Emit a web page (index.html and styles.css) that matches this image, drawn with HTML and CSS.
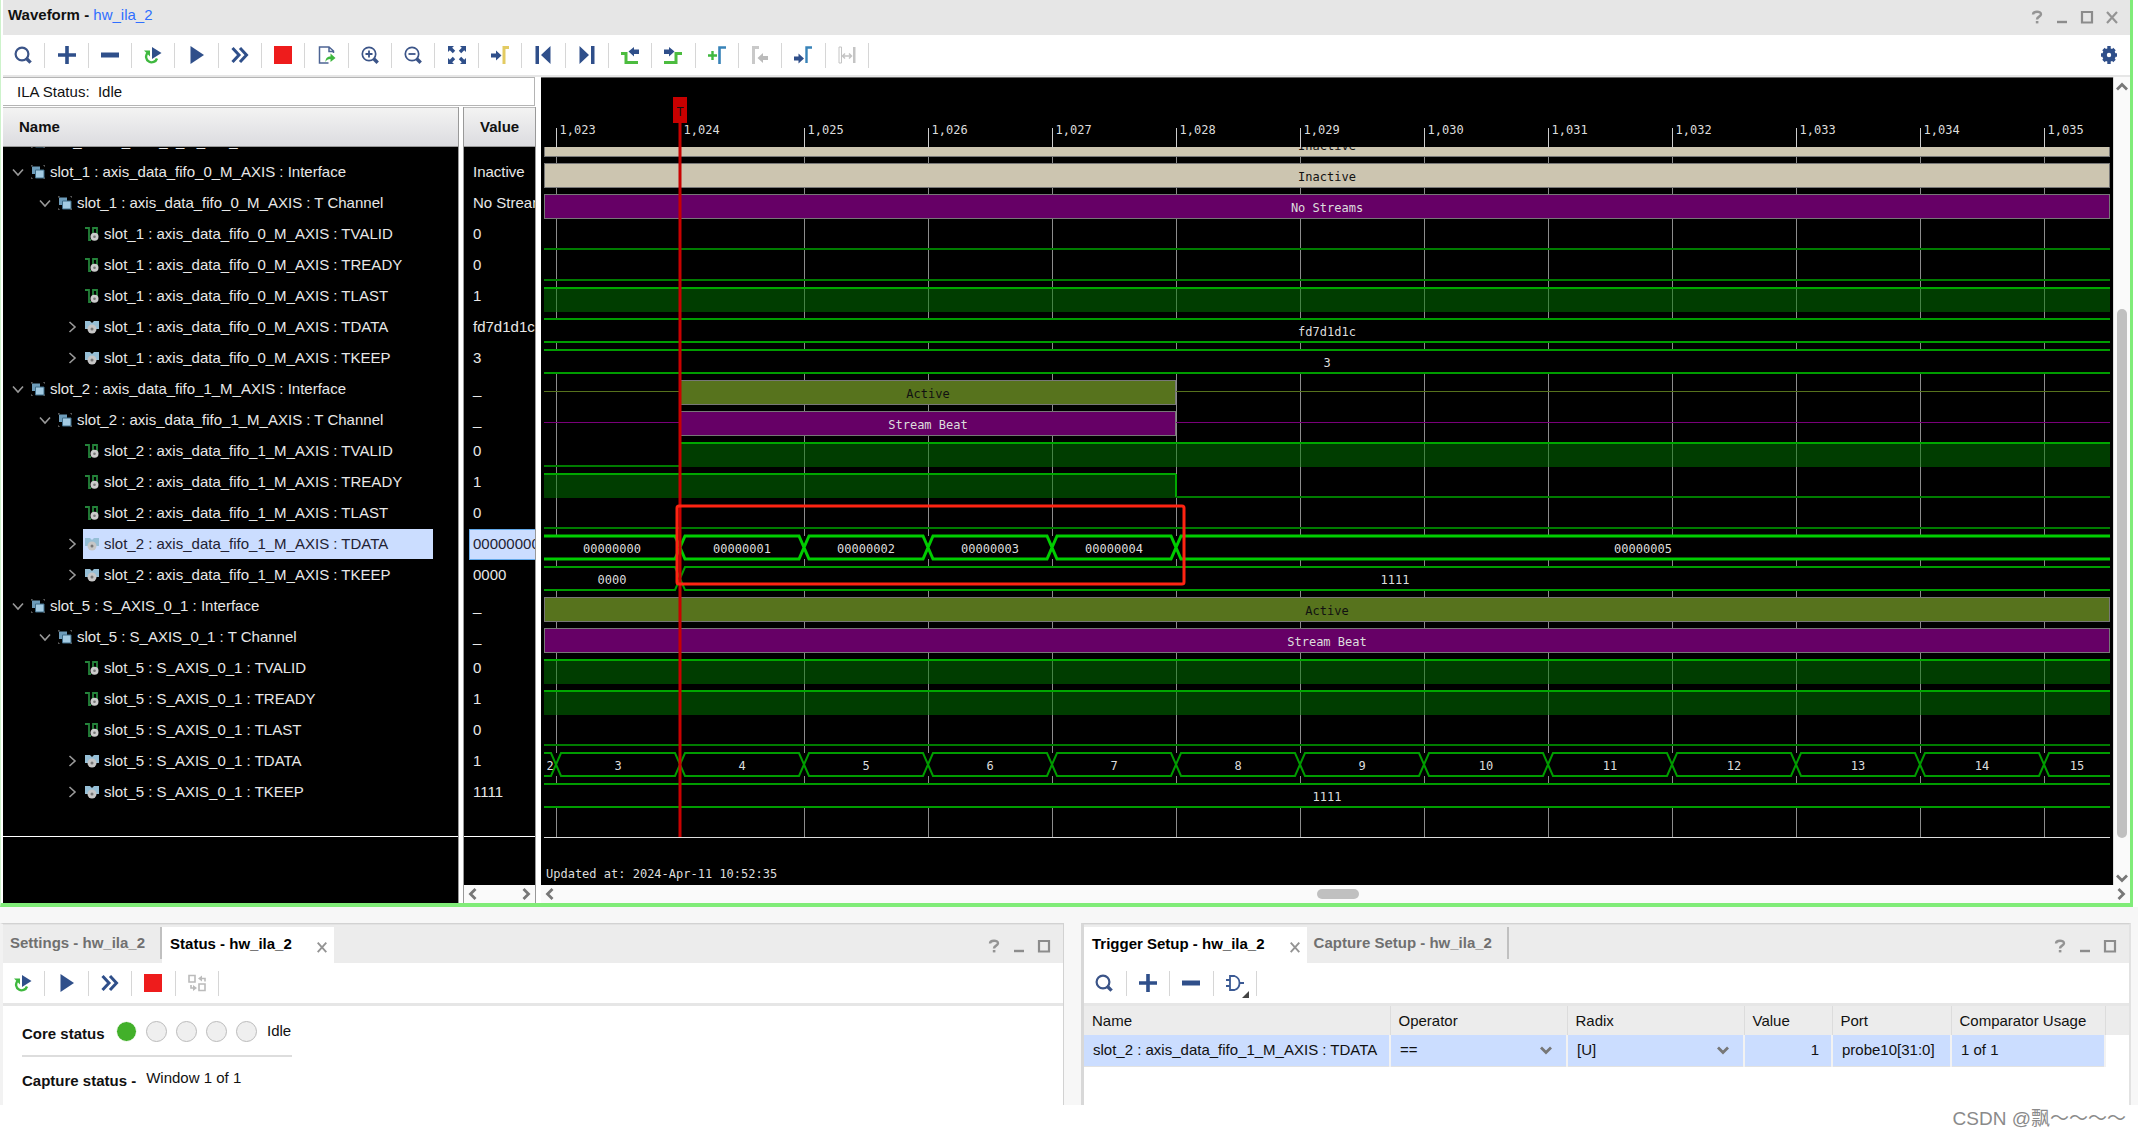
FILE: index.html
```html
<!DOCTYPE html>
<html lang="en">
<head>
    <meta charset="UTF-8">
    <meta name="viewport" content="width=device-width, initial-scale=1.0">
    <title>Waveform - hw_ila_2</title>
    <link rel="stylesheet" href="styles.css">
</head>
<body>
    <!-- shared icons -->
    <svg class="sprite" aria-hidden="true">
        <symbol id="i-search" viewBox="0 0 18 18"><circle cx="8" cy="8" r="6.4" fill="none" stroke="#3b5488" stroke-width="2.2"/><path d="M12 12l4.6 4.6" stroke="#3b5488" stroke-width="3.4"/></symbol>
        <symbol id="i-plus" viewBox="0 0 18 18"><path d="M9 0v18M0 9h18" stroke="#2f4f8a" stroke-width="3.6"/></symbol>
        <symbol id="i-minus" viewBox="0 0 18 18"><path d="M0 9h18" stroke="#2f4f8a" stroke-width="5"/></symbol>
        <symbol id="i-rerun" viewBox="0 0 18 18"><path d="M3.500 7A5.600 5.600 0 1 0 13 12.500" fill="none" stroke="#3fb83f" stroke-width="2.400"/><path d="M0 4.500h6v6z" fill="#3fb83f"/><path d="M8 1l9.500 6L8 13z" fill="#2f4f8a"/></symbol>
        <symbol id="i-play" viewBox="0 0 18 18"><path d="M2.500 0L16 9 2.500 18z" fill="#2f4f8a"/></symbol>
        <symbol id="i-forward" viewBox="0 0 18 18"><path d="M1.500 2l6.500 7-6.500 7M9 2l6.500 7L9 16" fill="none" stroke="#2f4f8a" stroke-width="3"/></symbol>
        <symbol id="i-stop" viewBox="0 0 18 18"><path d="M0 0h18v18H0z" fill="#ee1c1c"/></symbol>
        <symbol id="i-export" viewBox="0 0 18 18"><path d="M15.500 7V5L11 1H1.500v16h9M11 1v4.500h4.500" fill="none" stroke="#4d6494" stroke-width="1.500"/><path d="M7.500 16c0-4 2-5.500 5-5.500V7.500l5 4.500-5 4v-3c-2.500 0-4 .8-5 3z" fill="#3fb83f"/></symbol>
        <symbol id="i-zoomin" viewBox="0 0 18 18"><circle cx="8" cy="8" r="6.700" fill="none" stroke="#3b5488" stroke-width="1.700"/><path d="M12.500 12.500l4.200 4.200" stroke="#3b5488" stroke-width="3.400"/><path d="M8 4.500v7M4.500 8h7" stroke="#3b5488" stroke-width="1.800"/></symbol>
        <symbol id="i-zoomout" viewBox="0 0 18 18"><circle cx="8" cy="8" r="6.700" fill="none" stroke="#3b5488" stroke-width="1.700"/><path d="M12.500 12.500l4.200 4.200" stroke="#3b5488" stroke-width="3.400"/><path d="M4.500 8h7" stroke="#3b5488" stroke-width="1.800"/></symbol>
        <symbol id="i-fit" viewBox="0 0 18 18"><path d="M0 0h6L4.200 1.800l3 3-2.400 2.400-3-3L0 6zM18 0v6l-1.800-1.800-3 3-2.400-2.400 3-3L12 0zM0 18v-6l1.800 1.800 3-3 2.400 2.400-3 3L6 18zM18 18h-6l1.800-1.800-3-3 2.400-2.400 3 3L18 12z" fill="#2f4f8a"/></symbol>
        <symbol id="i-gototrig" viewBox="0 0 18 18"><path d="M0 7.500h5V4.500l5.500 5-5.500 5v-3H0z" fill="#2f4f8a"/><path d="M13 18V1.500h5" fill="none" stroke="#e3cb62" stroke-width="3"/></symbol>
        <symbol id="i-first" viewBox="0 0 18 18"><path d="M1.500 0h3.500v18H1.500zM16.500 0v18L7 9z" fill="#2f4f8a"/></symbol>
        <symbol id="i-last" viewBox="0 0 18 18"><path d="M13 0h3.500v18H13zM1.500 0L11 9l-9.500 9z" fill="#2f4f8a"/></symbol>
        <symbol id="i-prevedge" viewBox="0 0 18 18"><path d="M0 7.500h5v9h12" fill="none" stroke="#4cbc3f" stroke-width="3"/><path d="M18 3.500h-5V1L7.500 5.500l5.500 5V8h5z" fill="#2f4f8a"/></symbol>
        <symbol id="i-nextedge" viewBox="0 0 18 18"><path d="M0 16.500h12v-9h6" fill="none" stroke="#4cbc3f" stroke-width="3"/><path d="M0 3.500h5V1l5.500 4.500-5.500 5V8H0z" fill="#2f4f8a"/></symbol>
        <symbol id="i-addmark" viewBox="0 0 18 18"><path d="M4.500 5v9M0 9.500h9" stroke="#3fb83f" stroke-width="2.400"/><path d="M11.500 18V1.500H18" fill="none" stroke="#3883b8" stroke-width="2.600"/></symbol>
        <symbol id="i-prevmark" viewBox="0 0 18 18"><path d="M2.500 18V1.500H8" fill="none" stroke="#c9c9c9" stroke-width="3"/><path d="M17 10h-5V7l-5.500 5 5.500 5v-3h5z" fill="#bbb"/></symbol>
        <symbol id="i-nextmark" viewBox="0 0 18 18"><path d="M0 10.500h4.500v-3l5.500 5-5.500 5v-3H0z" fill="#2f4f8a"/><path d="M12.500 17V1.500H18" fill="none" stroke="#3883b8" stroke-width="2.400"/></symbol>
        <symbol id="i-swap" viewBox="0 0 18 18"><path d="M1 1h2.500v16H1z" fill="none" stroke="#c4c4c4"/><path d="M15 1h2.500v16H15z" fill="#c4c4c4"/><path d="M5 10h8M7 7.500L4.500 10 7 12.500M11 7.500l2.500 2.500-2.500 2.500" fill="none" stroke="#c4c4c4" stroke-width="1.500"/></symbol>
        <symbol id="i-windows" viewBox="0 0 18 18"><path d="M1 1.500h6v6.500H1zM11 10h6v6.500h-6z" fill="none" stroke="#bbb" stroke-width="1.600"/><path d="M17 7.500V4.500h-4M3 11v3h2" fill="none" stroke="#bbb" stroke-width="1.600"/><path d="M14 1.500l-4 3 4 3zM5 11l4 3-4 3z" fill="#bbb"/></symbol>
        <symbol id="i-gate" viewBox="0 0 18 18"><path d="M4 2h4.500c3 1 5 4 5 7s-2 6-5 7H4zM0 6h4M0 12h4M13.500 9H18" fill="none" stroke="#3b5a94" stroke-width="1.800"/></symbol>
        <symbol id="i-gear" viewBox="0 0 18 18"><path d="M9 0v18M1 9h16M3.500 3l11 12M14.500 3l-11 12" stroke="#2f4f8a" stroke-width="3.400"/><circle cx="9" cy="9" r="4.500" fill="#fff" stroke="#2f4f8a" stroke-width="4.600"/></symbol>
        <symbol id="i-help" viewBox="0 0 14 14"><path d="M3 4.500C3 .8 11 .8 11 4.300 11 6.800 7 6.500 7 9.500" fill="none" stroke="#949494" stroke-width="2.400"/><path d="M5.800 11h2.600v2.400H5.800z" fill="#949494"/></symbol>
        <symbol id="i-min" viewBox="0 0 14 14"><path d="M2 12h10" stroke="#8c8c8c" stroke-width="2.400"/></symbol>
        <symbol id="i-max" viewBox="0 0 14 14"><path d="M2 2h10v10.500H2z" fill="none" stroke="#8c8c8c" stroke-width="2.200"/></symbol>
        <symbol id="i-close" viewBox="0 0 14 14"><path d="M2 2l10 11M12 2L2 13" stroke="#949494" stroke-width="2.200"/></symbol>
        <symbol id="i-chev" viewBox="0 0 14 14"><path d="M2 4.500l5 5 5-5" fill="none" stroke="currentColor" stroke-width="2.800"/></symbol>
        <symbol id="i-chevthin" viewBox="0 0 14 14"><path d="M2 4.500l5 5.500 5-5.500" fill="none" stroke="currentColor" stroke-width="1.600"/></symbol>
        <symbol id="i-group" viewBox="0 0 14 14"><path d="M0 2V0h2M12 0h2v2M0 12v2h2M12 14h2v-2" fill="none" stroke="#777"/><path d="M1 1.500h8V9H1z" fill="#6d9cba"/><path d="M4.500 5h8.500v8H4.500z" fill="#a3cbe3" stroke="#3f6c88"/></symbol>
        <symbol id="i-wire" viewBox="0 0 14 14"><path d="M0 1h4v12h2M8 13V1h4v8" fill="none" stroke="#24833a" stroke-width="1.800"/><circle cx="9.500" cy="9.800" r="4" fill="#ccc"/><circle cx="9.500" cy="9.800" r="1.300" fill="#777"/></symbol>
        <symbol id="i-bus" viewBox="0 0 14 14"><path d="M0 1h5l2 2 2-2h5v8h-3l-2 2H5L3 9H0z" fill="#96bfd6"/><circle cx="7" cy="9" r="4.500" fill="#c6c6c6"/><circle cx="7" cy="9" r="1.500" fill="#777"/></symbol>
    </svg>

    <section class="waveform">
        <header class="titlebar">
            <h1>Waveform - <a href="#">hw_ila_2</a></h1>
            <div class="window-buttons">
                <button aria-label="Help"><svg><use href="#i-help"/></svg></button>
                <button aria-label="Minimize"><svg><use href="#i-min"/></svg></button>
                <button aria-label="Maximize"><svg><use href="#i-max"/></svg></button>
                <button aria-label="Close"><svg><use href="#i-close"/></svg></button>
            </div>
        </header>

        <div class="toolbar">
            <div class="tools tools-20">
                <button aria-label="Search"><svg><use href="#i-search"/></svg></button>
                <button aria-label="Add"><svg><use href="#i-plus"/></svg></button>
                <button aria-label="Remove"><svg><use href="#i-minus"/></svg></button>
                <button aria-label="Auto re-trigger"><svg><use href="#i-rerun"/></svg></button>
                <button aria-label="Run trigger"><svg><use href="#i-play"/></svg></button>
                <button aria-label="Run trigger immediate"><svg><use href="#i-forward"/></svg></button>
                <button aria-label="Stop trigger"><svg><use href="#i-stop"/></svg></button>
                <button aria-label="Export data"><svg><use href="#i-export"/></svg></button>
                <button aria-label="Zoom in"><svg><use href="#i-zoomin"/></svg></button>
                <button aria-label="Zoom out"><svg><use href="#i-zoomout"/></svg></button>
                <button aria-label="Zoom fit"><svg><use href="#i-fit"/></svg></button>
                <button aria-label="Go to cursor"><svg><use href="#i-gototrig"/></svg></button>
                <button aria-label="First"><svg><use href="#i-first"/></svg></button>
                <button aria-label="Last"><svg><use href="#i-last"/></svg></button>
                <button aria-label="Previous transition"><svg><use href="#i-prevedge"/></svg></button>
                <button aria-label="Next transition"><svg><use href="#i-nextedge"/></svg></button>
                <button aria-label="Add marker"><svg><use href="#i-addmark"/></svg></button>
                <button aria-label="Previous marker"><svg><use href="#i-prevmark"/></svg></button>
                <button aria-label="Next marker"><svg><use href="#i-nextmark"/></svg></button>
                <button aria-label="Swap cursors"><svg><use href="#i-swap"/></svg></button>
            </div>
            <button class="settings" aria-label="Settings"><svg><use href="#i-gear"/></svg></button>
        </div>

        <div class="viewer">
            <div class="signals">
                <p class="ila-status">ILA Status:&nbsp; Idle</p>
                <div class="columns">
                    <div class="column names">
                        <h2>Name</h2>
                        <div class="list"><ul id="names"></ul></div>
                        <div class="foot"></div>
                    </div>
                    <div class="column values">
                        <h2>Value</h2>
                        <div class="list"><ul id="values"></ul></div>
                        <div class="foot"></div>
                        <div class="hscroll">
                            <svg class="left"><use href="#i-chev"/></svg>
                            <svg class="right"><use href="#i-chev"/></svg>
                        </div>
                    </div>
                </div>
            </div>
            <div class="plot">
                <svg id="wave"></svg>
                <div class="hscroll">
                    <svg class="left"><use href="#i-chev"/></svg>
                    <span class="thumb"></span>
                    <svg class="right"><use href="#i-chev"/></svg>
                </div>
            </div>
            <div class="vscroll">
                <svg class="up"><use href="#i-chev"/></svg>
                <span class="thumb"></span>
                <svg><use href="#i-chev"/></svg>
            </div>
        </div>
    </section>

    <div class="docks">
        <section class="dock">
            <header class="tabs">
                <button class="tab">Settings - hw_ila_2</button>
                <button class="tab active">Status - hw_ila_2 <svg><use href="#i-close"/></svg></button>
                <div class="window-buttons">
                    <button aria-label="Help"><svg><use href="#i-help"/></svg></button>
                    <button aria-label="Minimize"><svg><use href="#i-min"/></svg></button>
                    <button aria-label="Maximize"><svg><use href="#i-max"/></svg></button>
                </div>
            </header>
            <div class="toolbar">
                <div class="tools tools-5">
                    <button aria-label="Auto re-trigger"><svg><use href="#i-rerun"/></svg></button>
                    <button aria-label="Run trigger"><svg><use href="#i-play"/></svg></button>
                    <button aria-label="Run trigger immediate"><svg><use href="#i-forward"/></svg></button>
                    <button aria-label="Stop trigger"><svg><use href="#i-stop"/></svg></button>
                    <button aria-label="Dashboard"><svg><use href="#i-windows"/></svg></button>
                </div>
            </div>
            <div class="status">
                <div class="core">
                    <strong>Core status</strong>
                    <div class="leds">
                        <i class="led on"></i><i class="led"></i><i class="led"></i><i class="led"></i><i class="led"></i>
                    </div>
                    <span>Idle</span>
                </div>
                <div class="capture"><strong>Capture status -</strong> <span>Window 1 of 1</span></div>
            </div>
        </section>

        <section class="dock">
            <header class="tabs">
                <button class="tab active">Trigger Setup - hw_ila_2 <svg><use href="#i-close"/></svg></button>
                <button class="tab">Capture Setup - hw_ila_2</button>
                <div class="window-buttons">
                    <button aria-label="Help"><svg><use href="#i-help"/></svg></button>
                    <button aria-label="Minimize"><svg><use href="#i-min"/></svg></button>
                    <button aria-label="Maximize"><svg><use href="#i-max"/></svg></button>
                </div>
            </header>
            <div class="toolbar">
                <div class="tools tools-4">
                    <button aria-label="Search"><svg><use href="#i-search"/></svg></button>
                    <button aria-label="Add"><svg><use href="#i-plus"/></svg></button>
                    <button aria-label="Remove"><svg><use href="#i-minus"/></svg></button>
                    <button class="menu" aria-label="Trigger condition"><svg><use href="#i-gate"/></svg></button>
                </div>
            </div>
            <table class="probes">
                <colgroup>
                    <col class="c-name"><col class="c-op"><col class="c-radix"><col class="c-value"><col class="c-port"><col class="c-usage"><col>
                </colgroup>
                <thead>
                    <tr><th>Name</th><th>Operator</th><th>Radix</th><th>Value</th><th>Port</th><th>Comparator Usage</th><th></th></tr>
                </thead>
                <tbody>
                    <tr>
                        <td>slot_2 : axis_data_fifo_1_M_AXIS : TDATA</td>
                        <td><label class="pick"><select aria-label="Operator"><option>==</option><option>!=</option></select><svg><use href="#i-chev"/></svg></label></td>
                        <td><label class="pick"><select aria-label="Radix"><option>[U]</option><option>[H]</option></select><svg><use href="#i-chev"/></svg></label></td>
                        <td class="num">1</td>
                        <td>probe10[31:0]</td>
                        <td>1 of 1</td>
                        <td></td>
                    </tr>
                </tbody>
            </table>
        </section>
    </div>

    <footer class="credit">CSDN @飘～～～～</footer>

    <script src="waveform.js"></script>
</body>
</html>
```
FILE: styles.css
```css
* {
    box-sizing: border-box;
}

body {
    margin: 0;
    background: #fff;
    color: #111;
    font: 15px/18px "Liberation Sans", "Noto Sans CJK SC", sans-serif;
}

h1, h2, p, ul {
    margin: 0;
    padding: 0;
    font-size: 15px;
    list-style: none;
}

button {
    margin: 0;
    padding: 0;
    border: 0;
    background: none;
    color: inherit;
    font: inherit;
}

.sprite {
    display: none;
}

/* main window */
.waveform {
    margin-right: 5px;
    padding-left: 2px;
    border-left: 1px solid #cdf3cb;
    border-right: 3px solid #80ec78;
    border-bottom: 4px solid #80ec78;
}

.titlebar {
    display: flex;
    justify-content: space-between;
    align-items: center;
    height: 35px;
    padding: 0 11px 5px 5px;
    background: #e6e6e6;
}

.titlebar a {
    color: #2f6fff;
    font-weight: normal;
    text-decoration: none;
}

.window-buttons {
    display: flex;
    gap: 11px;
    padding-top: 4px;
}

.window-buttons svg {
    display: block;
    width: 14px;
    height: 14px;
}

.toolbar {
    display: flex;
    justify-content: space-between;
    align-items: center;
    height: 42px;
    padding-right: 12px;
    border-bottom: 2px solid #e6e6e6;
    background: #fff;
}

.tools {
    display: grid;
    margin-left: -1px;
}

.tools-20 {
    grid-template-columns: repeat(20, 1fr);
    width: 867px;
}

.tools-5 {
    grid-template-columns: repeat(5, 1fr);
    width: 217px;
}

.tools-4 {
    grid-template-columns: repeat(4, 1fr);
    width: 174px;
}

.tools button {
    display: flex;
    justify-content: center;
    align-items: center;
    height: 25px;
    border-right: 1px solid #d6d6d6;
}

.tools svg, .settings svg {
    display: block;
    width: 18px;
    height: 18px;
}

.menu {
    position: relative;
}

.menu::after {
    content: "";
    position: absolute;
    right: 7px;
    bottom: -2px;
    border-left: 7px solid transparent;
    border-bottom: 7px solid #444;
}

/* signal list */
.viewer {
    display: flex;
    background: #fff;
}

.signals {
    display: flex;
    flex-direction: column;
    flex: 0 0 533px;
    min-width: 0;
}

.ila-status {
    height: 29px;
    margin: 0 1px 1px 0;
    padding: 5px 14px;
    border: 1px solid #b4b4b4;
    border-left: 0;
}

.columns {
    display: flex;
    flex: 1;
    gap: 4px;
}

.column {
    display: flex;
    flex-direction: column;
    min-width: 0;
    border-right: 1px solid #999;
}

.names {
    flex: 1;
}

.values {
    flex: 0 0 73px;
    border-left: 1px solid #999;
}

.column h2 {
    height: 40px;
    padding: 10px 16px;
    border-top: 1px solid #bbb;
    border-bottom: 1px solid #999;
    background: linear-gradient(#f3f3f3, #dcdce0);
}

.list {
    height: 690px;
    overflow: hidden;
    border-bottom: 1px solid #fff;
    background: #000;
    color: #e8e8e8;
}

/* scrolled down so only the end of the first row is left */
.list ul {
    margin-top: -21px;
}

.list li {
    display: flex;
    align-items: center;
    height: 31px;
    padding-bottom: 1px;
    white-space: nowrap;
}

.names li {
    padding-left: 7px;
}

.names .level-1 {
    padding-left: 34px;
}

.names .level-2 {
    padding-left: 61px;
}

.twist {
    display: flex;
    justify-content: center;
    width: 16px;
    margin-right: 3px;
    color: #999;
}

.twist svg, .signal svg {
    width: 14px;
    height: 14px;
}

.twist.closed svg {
    transform: rotate(-90deg);
}

.signal {
    display: flex;
    align-items: center;
    gap: 5px;
    height: 30px;
    padding-left: 2px;
}

.values li {
    margin-left: 5px;
    padding-left: 4px;
}

.selected .signal {
    width: 350px;
}

.selected .signal, .values .selected {
    background: #cbddff;
    color: #223;
}

.values .selected {
    padding-left: 3px;
    border: 1px solid #62a8e8;
    border-right: 0;
}

.foot {
    flex: 1;
    background: #000;
}

/* scroll bars */
.hscroll, .vscroll {
    display: flex;
    justify-content: space-between;
    align-items: center;
    background: #fafafa;
    color: #777;
}

.hscroll {
    height: 18px;
    padding: 0 2px;
}

.hscroll svg, .vscroll svg {
    width: 14px;
    height: 14px;
}

.left {
    transform: rotate(90deg);
}

.right {
    transform: rotate(-90deg);
}

.up {
    transform: rotate(180deg);
}

.thumb {
    border-radius: 5px;
    background: #c0c0c0;
}

.plot {
    flex: 1;
    min-width: 0;
    margin-left: 5px;
    border-top: 1px solid #666;
}

.plot .hscroll {
    margin-right: -17px;
}

.plot .thumb {
    width: 42px;
    height: 10px;
    margin-left: 4px;
}

.vscroll {
    flex-direction: column;
    width: 17px;
    margin-bottom: 18px;
    padding: 3px 0 0;
    border-left: 1px solid #ddd;
}

.vscroll .thumb {
    width: 10px;
    height: 529px;
    margin-top: 182px;
}

/* waveform drawing */
#wave {
    display: block;
    width: 100%;
    height: 807px;
    background: #000;
    font: 12px "DejaVu Sans Mono", monospace;
}

#wave text {
    fill: #ddd;
    text-anchor: middle;
}

#wave .start {
    text-anchor: start;
}

#wave .dark {
    fill: #111;
}

.grid {
    stroke: #8c8c8c;
}

.grid.top {
    stroke: #ccc;
}

.high {
    fill: rgba(0, 122, 0, .5);
}

.edge {
    fill: none;
    stroke: #00a800;
    stroke-width: 2;
}

.low {
    stroke: #007c00;
    stroke-width: 2;
}

.bus {
    fill: none;
    stroke: #009c00;
    stroke-width: 2;
}

.bus.sel {
    stroke: #00cc00;
    stroke-width: 3;
}

.bar {
    stroke: #777;
    stroke-width: 1;
}

.bar.inactive {
    fill: #ccc5b0;
}

.bar.active {
    fill: #57731d;
}

.bar.stream {
    fill: #660066;
}

.idle.active {
    stroke: #57731d;
}

.idle.stream {
    stroke: #7a007a;
}

.base {
    stroke: #ddd;
}

.trigger {
    stroke: #c80000;
    stroke-width: 3;
}

.flag {
    fill: #c80000;
}

.note {
    fill: none;
    stroke: #ff2412;
    stroke-width: 3;
}

/* lower docks */
.docks {
    display: flex;
    gap: 17px;
    padding: 16px 5px 0 0;
    background: #f7f7f7;
}

.dock {
    flex: 0 1 1050px;
    min-width: 0;
    height: 182px;
    border: solid #d2d2d2;
    border-width: 1px 1px 0;
    background: #fff;
}

.dock:first-child {
    flex: 0 0 1064px;
    border-left: 3px solid #f2f2f2;
}

.dock:last-child {
    border-left: 3px solid #d8d8d8;
    border-right: 2px solid #e2e2e2;
}

.tabs {
    display: flex;
    height: 39px;
    padding: 2px 12px 0 0;
    border-top: 1px solid #e2e2e2;
    background: #ececec;
}

.tab {
    height: 32px;
    padding: 0 15px 0 7px;
    border-right: 2px solid #c0c0c0;
    color: #707070;
    font-weight: bold;
    white-space: nowrap;
}

.tab.active {
    display: flex;
    align-items: center;
    gap: 24px;
    height: 37px;
    padding: 0 6px 4px 8px;
    border-right: 0;
    background: #fff;
    color: #000;
}

.tab svg {
    width: 12px;
    height: 12px;
    margin-top: 6px;
}

.tabs .window-buttons {
    align-items: center;
    margin-left: auto;
    padding-top: 2px;
}

.dock .toolbar {
    height: 43px;
    border-bottom-width: 3px;
}

.status {
    padding: 15px 0 0 19px;
}

.core {
    display: flex;
    align-items: center;
    width: 270px;
    height: 36px;
    padding-bottom: 14px;
    border-bottom: 2px solid #ddd;
}

.core strong {
    width: 94px;
    padding-top: 6px;
}

.leds {
    display: flex;
    gap: 9px;
    margin-right: 10px;
}

.led {
    width: 21px;
    height: 21px;
    border: 1px solid #bbb;
    border-radius: 50%;
    background: #efefef;
}

.led.on {
    border-color: #fff;
    background: #42b02a;
}

.capture {
    display: flex;
    gap: 10px;
    padding-top: 12px;
}

.capture strong {
    padding-top: 3px;
}

.probes {
    width: 100%;
    table-layout: fixed;
    border-collapse: collapse;
}

.c-name {
    width: 306px;
}

.c-op, .c-radix {
    width: 177px;
}

.c-value {
    width: 88px;
}

.c-port {
    width: 119px;
}

.c-usage {
    width: 154px;
}

.probes th {
    height: 29px;
    padding: 0 8px;
    border-right: 1px solid #dcdcdc;
    background: #ececec;
    font-weight: normal;
    text-align: left;
    white-space: nowrap;
}

.probes td {
    height: 31px;
    padding: 0 9px;
    border-right: 2px solid #f2f2f2;
    border-bottom: 1px solid #e2e2e2;
    background: #cbddff;
    white-space: nowrap;
}

.probes th:last-child, .probes td:last-child {
    border: 0;
}

.probes td:last-child {
    background: #fff;
}

.probes .num {
    padding-right: 12px;
    text-align: right;
}

.pick {
    display: flex;
    align-items: center;
    color: #777;
}

.pick select {
    flex: 1;
    padding: 0;
    border: 0;
    background: none;
    color: #111;
    font: inherit;
    appearance: none;
}

.pick svg {
    width: 14px;
    height: 14px;
    margin-right: 4px;
}

.credit {
    padding: 2px 12px 0 0;
    color: #8a8a8a;
    font-size: 19px;
    line-height: 24px;
    text-align: right;
}
```
FILE: waveform.js
```js
const ROW = 31;          // row height
const TOP = 48;          // top of the first (half hidden) row
const LEFT = 3;          // where the traces start
const FIRST = 15;        // x of sample 1023
const STEP = 124;        // pixels per sample
const BASE = 759;        // white line under the traces

// sample number -> x
const at = (n) => FIRST + (n - 1023) * STEP;

function slot(prefix, interfaceRow, channelRow, rest) {
    const names = ["TVALID", "TREADY", "TLAST", "TDATA", "TKEEP"];
    return [
        { level: 0, name: `${prefix} : Interface`, icon: "group", ...interfaceRow },
        { level: 1, name: `${prefix} : T Channel`, icon: "group", ...channelRow },
        ...rest.map((r, i) => ({ level: 2, name: `${prefix} : ${names[i]}`, icon: i < 3 ? "wire" : "bus", ...r }))
    ];
}

const counter = [];
for (let n = 1022; n <= 1035; n++) {
    counter.push([n, n + 1, String(n - 1020)]);
}

const signals = [
    { level: 0, name: "slot_0 : axi_dma_0_M_AXI_MM2S : Interface", icon: "group", value: "", bar: "inactive", text: "Inactive" },
    ...slot("slot_1 : axis_data_fifo_0_M_AXIS",
        { value: "Inactive", bar: "inactive", text: "Inactive" },
        { value: "No Streams", bar: "stream", text: "No Streams" },
        [
            { value: "0", bits: [] },
            { value: "0", bits: [] },
            { value: "1", bits: [[0, 9999]] },
            { value: "fd7d1d1c", bus: [[0, 9999, "fd7d1d1c"]] },
            { value: "3", bus: [[0, 9999, "3"]] }
        ]),
    ...slot("slot_2 : axis_data_fifo_1_M_AXIS",
        { value: "_", bar: "active", text: "Active", from: 1024, to: 1028 },
        { value: "_", bar: "stream", text: "Stream Beat", from: 1024, to: 1028 },
        [
            { value: "0", bits: [[1024, 9999]] },
            { value: "1", bits: [[0, 1028]] },
            { value: "0", bits: [] },
            {
                value: "00000000", selected: true,
                bus: [[0, 1024, "00000000"], [1024, 1025, "00000001"], [1025, 1026, "00000002"],
                      [1026, 1027, "00000003"], [1027, 1028, "00000004"], [1028, 9999, "00000005"]]
            },
            { value: "0000", bus: [[0, 1024, "0000"], [1024, 9999, "1111"]] }
        ]),
    ...slot("slot_5 : S_AXIS_0_1",
        { value: "_", bar: "active", text: "Active" },
        { value: "_", bar: "stream", text: "Stream Beat" },
        [
            { value: "0", bits: [[0, 9999]] },
            { value: "1", bits: [[0, 9999]] },
            { value: "0", bits: [] },
            { value: "1", bus: counter },
            { value: "1111", bus: [[0, 9999, "1111"]] }
        ])
];

function fillLists() {
    document.getElementById("names").innerHTML = signals.map((s) => {
        const twist = s.icon === "wire" ? "" : '<svg><use href="#i-chevthin"/></svg>';
        return `<li class="level-${s.level}${s.selected ? " selected" : ""}">
            <span class="twist${s.icon === "bus" ? " closed" : ""}">${twist}</span>
            <span class="signal"><svg><use href="#i-${s.icon}"/></svg>${s.name}</span></li>`;
    }).join("");
    document.getElementById("values").innerHTML = signals
        .map((s) => `<li class="${s.selected ? "selected" : ""}">${s.value}</li>`).join("");
}

const line = (cls, x1, y1, x2, y2) => `<path class="${cls}" d="M${x1} ${y1}L${x2} ${y2}"/>`;
const label = (x, y, text, cls = "") => `<text class="${cls}" x="${x}" y="${y}">${text}</text>`;

function drawBar(s, y, right) {
    const x1 = s.from ? at(s.from) : LEFT;
    const x2 = s.to ? at(s.to) : right;
    let out = "";
    if (s.from) {
        out += line(`idle ${s.bar}`, LEFT, y + 17.5, x1, y + 17.5);
        out += line(`idle ${s.bar}`, x2, y + 17.5, right, y + 17.5);
    }
    out += `<rect class="bar ${s.bar}" x="${x1 + .5}" y="${y + 6.5}" width="${x2 - x1 - 1}" height="24"/>`;
    return out + label((x1 + x2) / 2, y + 24, s.text, s.bar === "stream" ? "" : "dark");
}

function drawBits(s, y, right) {
    const hi = y + 7;
    const lo = y + 30;
    let out = "";
    let x = LEFT;
    for (const [a, b] of s.bits) {
        const x1 = Math.max(at(a), LEFT);
        const x2 = Math.min(at(b), right);
        if (x1 > x) out += line("low", x, lo, x1, lo);
        out += `<rect class="high" x="${x1}" y="${hi}" width="${x2 - x1}" height="24"/>`;
        out += line("edge", x1, hi, x2, hi);
        if (x2 < right) out += line("edge", x2, hi, x2, lo);
        x = x2;
    }
    if (x < right) out += line("low", x, lo, right, lo);
    return out;
}

function drawBus(s, y, right) {
    const hi = y + 7;
    const lo = y + 30;
    const mid = (hi + lo) / 2;
    const cls = s.selected ? "bus sel" : "bus";
    return s.bus.map(([a, b, text]) => {
        const x1 = Math.max(at(a), LEFT);
        const x2 = Math.min(at(b), right);
        // an end that runs off the view stays open
        const start = at(a) < LEFT ? `M${x1} ${hi}` : `M${x1} ${mid}L${x1 + 5} ${hi}`;
        const end = at(b) > right ? `H${x2}M${x2} ${lo}` : `H${x2 - 5}L${x2} ${mid}L${x2 - 5} ${lo}`;
        const back = at(a) < LEFT ? `H${x1}` : `H${x1 + 5}L${x1} ${mid}`;
        return `<rect x="${x1}" y="${hi}" width="${x2 - x1}" height="${lo - hi}" fill="#000"/>` +
            `<path class="${cls}" d="${start}${end}${back}"/>` + label((x1 + x2) / 2, y + 24, text);
    }).join("");
}

function draw() {
    const svg = document.getElementById("wave");
    const width = svg.clientWidth;
    const right = width - 3;
    let grid = "";
    let ticks = "";
    for (let n = 1023; at(n) < right; n++) {
        const x = at(n) + .5;
        grid += line("grid", x, 70, x, BASE);
        ticks += line("grid top", x, 50, x, 70) + label(x + 3, 56, n.toLocaleString("en-US"), "start");
    }
    const rows = signals.map((s, i) => {
        const y = TOP + i * ROW;
        if (s.bar) return drawBar(s, y, right);
        return s.bus ? drawBus(s, y, right) : drawBits(s, y, right);
    }).join("");
    const t = at(1024);
    svg.innerHTML = `<clipPath id="body"><path d="M0 69H${width}V${BASE}H0z"/></clipPath>
        ${grid}<g clip-path="url(#body)">${rows}</g>${ticks}
        ${line("base", LEFT, BASE + .5, right, BASE + .5)}
        ${line("trigger", t, 44, t, BASE)}
        <rect class="flag" x="${t - 7}" y="19" width="14" height="26"/>${label(t, 38, "T", "dark")}
        <rect class="note" x="${t - 3}" y="428" width="${4 * STEP + 11}" height="78" rx="2"/>
        ${label(5, 800, "Updated at: 2024-Apr-11 10:52:35", "start")}`;
}

fillLists();
draw();
window.addEventListener("resize", draw);
```
